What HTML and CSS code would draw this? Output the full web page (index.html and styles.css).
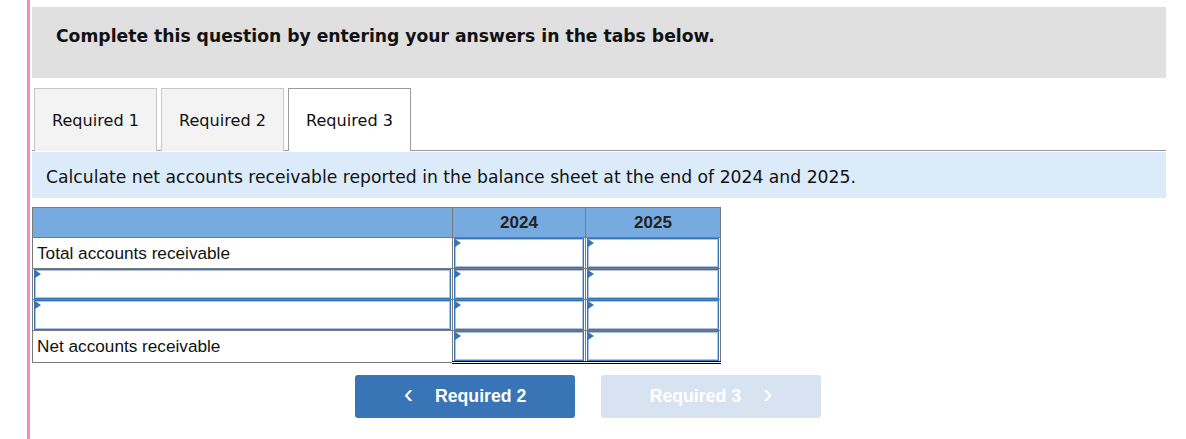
FILE: index.html
```html
<!DOCTYPE html>
<html>
<head>
<meta charset="utf-8">
<link rel="stylesheet" href="styles.css">
</head>
<body>
<div class="page">
  <div class="banner">Complete this question by entering your answers in the tabs below.</div>
  <div class="tabs">
    <div class="tab">Required 1</div>
    <div class="tab">Required 2</div>
    <div class="tab active">Required 3</div>
  </div>
  <div class="instr">Calculate net accounts receivable reported in the balance sheet at the end of 2024 and 2025.</div>
  <table class="grid">
    <colgroup><col class="c-lab"><col class="c-val"><col class="c-val2"></colgroup>
    <tr class="head"><th></th><th>2024</th><th>2025</th></tr>
    <tr>
      <td class="text">Total accounts receivable</td>
      <td><div class="inp"></div></td>
      <td><div class="inp"></div></td>
    </tr>
    <tr>
      <td><div class="inp"></div></td>
      <td><div class="inp"></div></td>
      <td><div class="inp"></div></td>
    </tr>
    <tr>
      <td><div class="inp"></div></td>
      <td><div class="inp"></div></td>
      <td><div class="inp"></div></td>
    </tr>
    <tr class="total">
      <td class="text">Net accounts receivable</td>
      <td class="num"><div class="inp"></div></td>
      <td class="num"><div class="inp"></div></td>
    </tr>
  </table>
  <div class="nav">
    <button class="btn prev"><span class="chev">&lsaquo;</span><span>Required 2</span></button>
    <button class="btn next"><span>Required 3</span><span class="chev">&rsaquo;</span></button>
  </div>
</div>
</body>
</html>
```
FILE: styles.css
```css
html, body { margin: 0; padding: 0; background: #fff; }
body { height: 439px; overflow: hidden; }
.page {
  margin-left: 27px;
  border-left: 3px solid #f28cb6;
  padding: 7px 20px 0 2px;
  height: 432px;
  box-sizing: content-box;
}
.banner {
  background: #e0e0e0;
  height: 71px;
  box-sizing: border-box;
  padding: 19px 0 0 24px;
  font-family: "DejaVu Sans", Verdana, sans-serif;
  font-weight: bold;
  font-size: 17.2px;
  color: #111;
}
.tabs {
  display: flex;
  gap: 4px;
  margin-top: 10px;
  padding-left: 2px;
  border-bottom: 1px solid #9a9a9a;
  height: 62px;
}
.tab {
  width: 123px;
  height: 63px;
  box-sizing: border-box;
  background: #f3f3f3;
  border: 1px solid #c6c6c6;
  border-bottom: none;
  display: flex;
  align-items: center;
  justify-content: center;
  font-family: "DejaVu Sans", Verdana, sans-serif;
  font-size: 16.1px;
  color: #111;
  padding-top: 0;
}
.tab.active {
  background: #fff;
  border-color: #9a9a9a;
  position: relative;
  z-index: 1;
}
.instr {
  margin-top: 1px;
  background: #dbebf9;
  height: 46px;
  box-sizing: border-box;
  padding: 15px 0 0 14px;
  font-family: "DejaVu Sans", Verdana, sans-serif;
  font-size: 17.2px;
  color: #111;
}
.grid {
  margin-top: 9px;
  border-collapse: collapse;
  table-layout: fixed;
  width: 688px;
  font-family: "Liberation Sans", Arial, sans-serif;
  font-size: 17.2px;
  color: #111;
}
.c-lab { width: 420px; }
.c-val { width: 133px; }
.c-val2 { width: 135px; }
.grid th, .grid td {
  border: 1px solid #7a7a7a;
  padding: 0;
  height: 30px;
}
.grid tr.head th {
  background: #77abe0;
  height: 29px;
  font-weight: bold;
  font-size: 17px;
  color: #222;
}
.grid td.text { padding: 0 0 0 4px; vertical-align: middle; }
.grid tr.total td.num {
  border-top: 1px solid #000;
  border-bottom: 3px double #000;
}
.inp {
  height: 30px;
  box-sizing: border-box;
  border: 1px solid #3a74b8;
  box-shadow: inset 0 0 0 1px #a8c5e9;
  margin: 0 1px;
  position: relative;
  background: #fff;
}
.inp::before {
  content: "";
  position: absolute;
  left: 0;
  top: 0;
  border-left: 6px solid #3a74b8;
  border-top: 4px solid transparent;
  border-bottom: 4px solid transparent;
}
.nav {
  display: flex;
  gap: 26px;
  margin-top: 11px;
  padding-left: 323px;
}
.btn {
  width: 220px;
  height: 43px;
  border: none;
  border-radius: 3px;
  font-family: "Liberation Sans", Arial, sans-serif;
  font-weight: bold;
  font-size: 17.7px;
  color: #fff;
  display: flex;
  align-items: center;
  justify-content: center;
  gap: 22px;
  padding: 0;
}
.btn .chev { font-size: 28px; font-weight: normal; line-height: 1; margin-top: -5px; }
.prev { background: #3874b6; }
.next { background: #d7e3f1; }
```
